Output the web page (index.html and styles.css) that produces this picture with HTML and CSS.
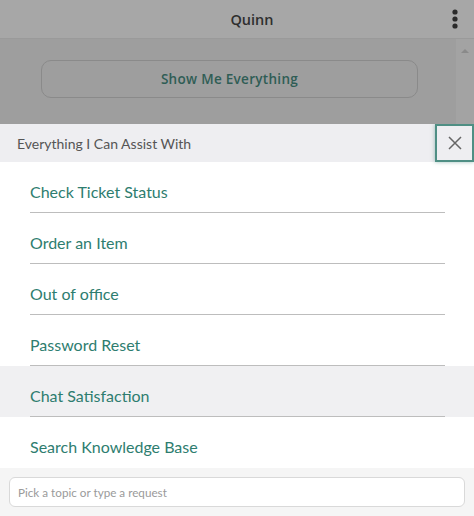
FILE: index.html
```html
<!DOCTYPE html>
<html lang="en">
<head>
<meta charset="UTF-8" />
<meta name="viewport" content="width=device-width, initial-scale=1" />
<title>Quinn</title>
<link rel="stylesheet" href="styles.css">
</head>
<body>
<div class="chat">
  <header class="top-bar">
    <span class="title">Quinn</span>
    <button class="kebab" aria-label="More">
      <svg width="6" height="20" viewBox="0 0 6 20"><circle cx="3" cy="3" r="2.6"/><circle cx="3" cy="10" r="2.6"/><circle cx="3" cy="17" r="2.6"/></svg>
    </button>
  </header>

  <div class="conversation">
    <div class="conv-body">
      <button class="show-all">Show Me Everything</button>
    </div>
    <div class="scrollbar"><span class="scroll-up"></span></div>
  </div>

  <div class="panel">
    <div class="panel-head">
      <span class="panel-title">Everything I Can Assist With</span>
      <button class="close" aria-label="Close">
        <svg width="14" height="14" viewBox="0 0 14 14"><path d="M1 1 L13 13 M13 1 L1 13" /></svg>
      </button>
    </div>
    <ul class="topics">
      <li><span>Check Ticket Status</span></li>
      <li><span>Order an Item</span></li>
      <li><span>Out of office</span></li>
      <li><span>Password Reset</span></li>
      <li class="active"><span>Chat Satisfaction</span></li>
      <li><span>Search Knowledge Base</span></li>
    </ul>
  </div>

  <div class="composer">
    <input type="text" placeholder="Pick a topic or type a request" />
  </div>
</div>
</body>
</html>
```

FILE: styles.css
```css
* {
  box-sizing: border-box;
}
body {
  margin: 0;
  font-family: Lato, 'Open Sans', sans-serif;
  background: #9e9e9e;
}
.chat {
  display: flex;
  flex-direction: column;
  height: 516px;
  overflow: hidden;
}
/* Top bar (dimmed by overlay) */
.top-bar {
  flex-shrink: 0;
  height: 39px;
  background: #a7a7a7;
  border-bottom: 1px solid #9a9a9a;
  display: flex;
  align-items: center;
  justify-content: center;
  position: relative;
}
.title {
  font-family: 'Open Sans', sans-serif;
  font-weight: 600;
  font-size: 14.5px;
  color: #2e2e2e;
  margin-left: 30px;
}
.kebab {
  position: absolute;
  right: 16px;
  top: 9px;
  background: none;
  border: none;
  padding: 0;
  display: flex;
}
.kebab svg {
  fill: #2a2a2a;
}
.conversation {
  flex-shrink: 0;
  height: 85px;
  display: flex;
  background: #9e9e9e;
}
.conv-body {
  flex: 1;
  padding: 21px 38px 0 41px;
}
.show-all {
  width: 377px;
  height: 38px;
  background: transparent;
  border: 1px solid #8a8a8a;
  border-radius: 10px;
  font-family: 'Open Sans', sans-serif;
  font-weight: 600;
  font-size: 13.5px;
  letter-spacing: 0.3px;
  color: #2f5d55;
}
.scrollbar {
  width: 18px;
  background: #a3a3a3;
  display: flex;
  justify-content: center;
  padding-top: 10px;
}
.scroll-up {
  width: 0;
  height: 0;
  border-left: 4px solid transparent;
  border-right: 4px solid transparent;
  border-bottom: 4px solid #8a8a8a;
}
/* Topic panel */
.panel {
  background: #fff;
  flex: 1;
  min-height: 0;
  overflow: hidden;
}
.panel-head {
  height: 38px;
  background: #eeeef1;
  display: flex;
  align-items: center;
  justify-content: space-between;
}
.panel-title {
  padding-left: 17px;
  font-size: 14px;
  color: #555;
}
.close {
  width: 39px;
  height: 38px;
  background: #eeeef1;
  border: 2px solid #4f8f84;
  box-shadow: 0 0 4px rgba(60, 130, 118, 0.5);
  display: flex;
  align-items: center;
  justify-content: center;
  padding: 0;
}
.close svg {
  stroke: #666;
  stroke-width: 1.5;
  fill: none;
}
.topics {
  list-style: none;
  margin: 0;
  padding: 0;
}
.topics li {
  height: 51px;
  padding: 0 29px 0 30px;
}
.topics li.active {
  background: #f0f0f2;
}
.topics span {
  display: flex;
  align-items: center;
  height: 51px;
  border-bottom: 1px solid #bdbdbd;
  font-size: 16px;
  color: #2e7d6f;
  padding-top: 8px;
}
.topics li:last-child span {
  border-bottom: none;
}
/* Composer */
.composer {
  flex-shrink: 0;
  height: 48px;
  background: #f5f5f5;
  padding: 9px 9px 9px;
}
.composer input {
  width: 100%;
  height: 30px;
  border: 1px solid #d9d9d9;
  border-radius: 6px;
  background: #fff;
  padding: 0 8px;
  font-family: Lato, sans-serif;
  font-size: 11.7px;
}
.composer input::placeholder {
  color: #9a9a9a;
}
```
